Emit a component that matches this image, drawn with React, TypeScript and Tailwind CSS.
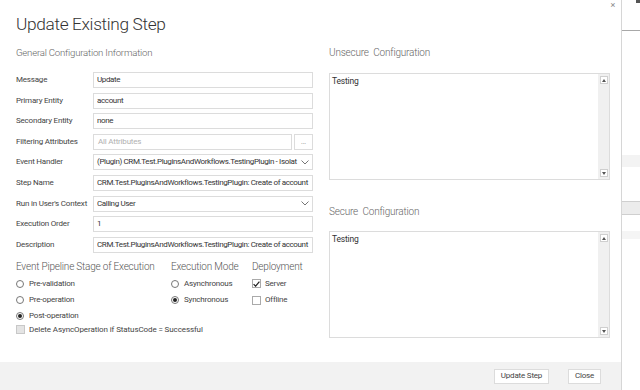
import React from "react";

const font = { fontFamily: 'Roboto, "Open Sans", sans-serif' };

type Row = {
  label: string;
  value: string;
  kind?: "text" | "select" | "lookup";
};

const rows: Row[] = [
  { label: "Message", value: "Update" },
  { label: "Primary Entity", value: "account" },
  { label: "Secondary Entity", value: "none" },
  { label: "Filtering Attributes", value: "All Attributes", kind: "lookup" },
  { label: "Event Handler", value: "(Plugin) CRM.Test.PluginsAndWorkflows.TestingPlugin - Isolat", kind: "select" },
  { label: "Step Name", value: "CRM.Test.PluginsAndWorkflows.TestingPlugin: Create of account" },
  { label: "Run in User's Context", value: "Calling User", kind: "select" },
  { label: "Execution Order", value: "1" },
  { label: "Description", value: "CRM.Test.PluginsAndWorkflows.TestingPlugin: Create of account" },
];

function Chevron() {
  return (
    <svg width="8" height="5" viewBox="0 0 8 5" className="ml-[2px] shrink-0">
      <path d="M0.5 0.5 L4 4 L7.5 0.5" fill="none" stroke="#666" strokeWidth="0.9" />
    </svg>
  );
}

function Field({ row }: { row: Row }) {
  if (row.kind === "lookup") {
    return (
      <div className="flex h-[16px] w-[220px] gap-[2px]">
        <div className="flex flex-1 items-center overflow-hidden whitespace-nowrap border border-[#dcdcdc] px-[4px] text-[8px] text-[#b0b0b0]">
          {row.value}
        </div>
        <div className="flex w-[19px] items-end justify-center border border-[#dcdcdc] pb-[3px] text-[7px] leading-none text-[#888]">
          ...
        </div>
      </div>
    );
  }
  return (
    <div className="flex h-[16px] w-[220px] items-center overflow-hidden whitespace-nowrap border border-[#dcdcdc] pl-[3px] pr-[3px] text-[8px] tracking-[-0.36px] text-[#333]">
      <span className="flex-1 overflow-hidden">{row.value}</span>
      {row.kind === "select" && <Chevron />}
    </div>
  );
}

function Radio({ label, checked }: { label: string; checked?: boolean }) {
  return (
    <div className="flex h-[16.3px] items-center gap-[5px] text-[8px] text-[#444]">
      <span className="flex h-[8px] w-[8px] items-center justify-center rounded-full border border-[#777] bg-white">
        {checked && <span className="h-[4px] w-[4px] rounded-full bg-[#222]" />}
      </span>
      {label}
    </div>
  );
}

function Check({ label, checked, disabled }: { label: string; checked?: boolean; disabled?: boolean }) {
  return (
    <div className="flex h-[16.3px] items-center gap-[4px] text-[8px] text-[#444]">
      <span
        className={
          disabled
            ? "flex h-[9px] w-[9px] items-center justify-center border border-[#c8c8c8] bg-[#e4e4e4]"
            : "flex h-[9px] w-[9px] items-center justify-center border border-[#aaa] bg-white"
        }
      >
        {checked && (
          <svg width="7" height="6" viewBox="0 0 7 6">
            <path d="M0.6 3.2 L2.6 5.2 L6.4 0.6" fill="none" stroke="#222" strokeWidth="1.2" />
          </svg>
        )}
      </span>
      {label}
    </div>
  );
}

function ScrollArrow({ up }: { up?: boolean }) {
  return (
    <div className="flex h-[8px] w-[8px] items-center justify-center border border-[#cfcfcf] bg-white">
      <svg width="4" height="3" viewBox="0 0 4 3">
        <path d={up ? "M0 3 L2 0 L4 3 Z" : "M0 0 L2 3 L4 0 Z"} fill="#555" />
      </svg>
    </div>
  );
}

function TextBox({ value }: { value: string }) {
  return (
    <div className="flex h-[107px] w-[281px] border border-[#dcdcdc]">
      <div className="flex-1 px-[2px] pt-[2px] text-[8.5px] leading-[11px] text-[#333]">{value}</div>
      <div className="flex w-[11px] flex-col items-center justify-between bg-[#f0f0f0] py-[2px]">
        <ScrollArrow up />
        <ScrollArrow />
      </div>
    </div>
  );
}

export default function App() {
  return (
    <div className="flex h-[390px] w-[640px] overflow-hidden bg-white tracking-[-0.2px]" style={font}>
      <div className="relative flex w-[622px] shrink-0 flex-col border-r border-[#d6d6d6]">
        <span className="absolute right-[6px] top-[1px] text-[9px] leading-[9px] text-[#888]">×</span>

        <div className="h-[362px] px-[16px]">
          <div className="mt-[12px] h-[24px] text-[17.3px] font-light leading-[24px] tracking-[-0.35px] text-[#333]">
            Update Existing Step
          </div>

          <div className="mt-[9px] flex gap-[16px]">
            <div className="flex w-[297px] flex-col">
              <div className="h-[16px] text-[9.6px] font-light leading-[16px] text-[#666]">
                General Configuration Information
              </div>
              <div className="mt-[11px] flex flex-col gap-[4.6px]">
                {rows.map((r) => (
                  <div key={r.label} className="flex h-[16px] items-center">
                    <span className="w-[77px] shrink-0 whitespace-nowrap text-[8px] text-[#444]">{r.label}</span>
                    <Field row={r} />
                  </div>
                ))}
              </div>

              <div className="mt-[6px] flex">
                <div className="flex w-[155px] flex-col">
                  <div className="mb-[1px] h-[16px] whitespace-nowrap text-[10px] font-light leading-[16px] text-[#555]">
                    Event Pipeline Stage of Execution
                  </div>
                  <Radio label="Pre-validation" />
                  <Radio label="Pre-operation" />
                  <Radio label="Post-operation" checked />
                </div>
                <div className="flex w-[81px] flex-col">
                  <div className="mb-[1px] h-[16px] whitespace-nowrap text-[10px] font-light leading-[16px] text-[#555]">
                    Execution Mode
                  </div>
                  <Radio label="Asynchronous" />
                  <Radio label="Synchronous" checked />
                </div>
                <div className="flex flex-col">
                  <div className="mb-[1px] h-[16px] whitespace-nowrap text-[10px] font-light leading-[16px] text-[#555]">
                    Deployment
                  </div>
                  <Check label="Server" checked />
                  <Check label="Offline" />
                </div>
              </div>
              <div className="-mt-[3px] tracking-[-0.1px]">
                <Check label="Delete AsyncOperation if StatusCode = Successful" disabled />
              </div>
            </div>

            <div className="flex flex-col">
              <div className="h-[16px] text-[10px] font-light leading-[16px] text-[#666]">Unsecure&nbsp; Configuration</div>
              <div className="mt-[12px]">
                <TextBox value="Testing" />
              </div>
              <div className="mt-[24px] h-[16px] text-[10px] font-light leading-[16px] text-[#666]">
                Secure&nbsp; Configuration
              </div>
              <div className="mt-[11px]">
                <TextBox value="Testing" />
              </div>
            </div>
          </div>
        </div>

        <div className="flex h-[28px] items-center justify-end gap-[19px] bg-[#f2f2f2] pr-[20px]">
          <button className="h-[15px] w-[55px] whitespace-nowrap border border-[#dcdcdc] bg-white text-[8px] leading-none text-[#444]">
            Update Step
          </button>
          <button className="h-[15px] w-[33px] border border-[#dcdcdc] bg-white text-[8px] leading-none text-[#444]">
            Close
          </button>
        </div>
      </div>

      <div className="relative flex-1">
        <div className="ml-auto h-[3px] w-[4px] bg-[#555]" />
        <div className="mt-[27px] h-[1px] bg-[#a8a8a8]" />
        <div className="mt-[124px] h-[12px] bg-[#f3f3f3]" />
        <div className="mt-[34px] h-[14px] border-y border-[#cfcfcf] bg-[#ececec]" />
        <div className="mt-[16px] h-[8px] bg-[#f5f5f5]" />
      </div>
    </div>
  );
}
